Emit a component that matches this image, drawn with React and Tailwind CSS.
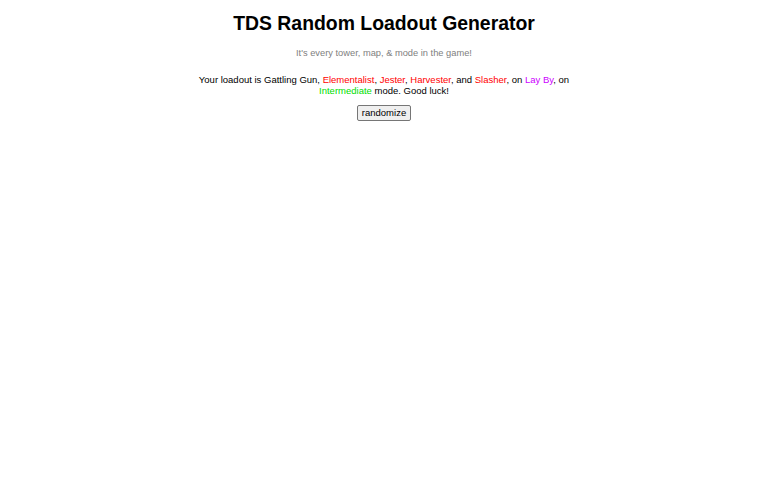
export default function App() {
  return (
    <div className="min-h-screen bg-white text-center" style={{ fontFamily: '"Liberation Sans", Arial, sans-serif' }}>
      <h1 className="pt-[12px] text-[19.4px] font-bold leading-[22px] text-black">TDS Random Loadout Generator</h1>
      <p className="mt-[14px] text-[9.3px] leading-[11px] text-[#808080]">It's every tower, map, &amp; mode in the game!</p>
      <p className="mx-auto mt-[15px] w-[390px] text-[9.5px] leading-[11px] text-black">
        Your loadout is Gattling Gun, <span className="text-[#ff0000]">Elementalist</span>,{" "}
        <span className="text-[#ff0000]">Jester</span>, <span className="text-[#ff0000]">Harvester</span>, and{" "}
        <span className="text-[#ff0000]">Slasher</span>, on <span className="text-[#cc00ff]">Lay By</span>, on{" "}
        <span className="text-[#00dd00]">Intermediate</span> mode. Good luck!
      </p>
      <div className="mt-[3px]">
        <button className="rounded-[2px] border border-[#767676] bg-[#efefef] px-[4px] py-[1px] text-[9.5px] leading-[12px] text-black">
          randomize
        </button>
      </div>
    </div>
  )
}
